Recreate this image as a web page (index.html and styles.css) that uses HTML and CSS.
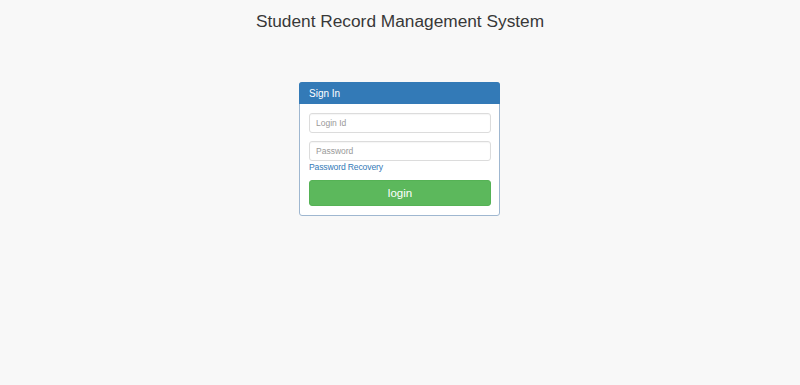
FILE: index.html
```html
<!DOCTYPE html>
<html>
<head>
<meta charset="utf-8">
<link rel="stylesheet" href="styles.css">
</head>
<body>
<h1 class="title">Student Record Management System</h1>
<div class="panel">
  <div class="panel-heading">Sign In</div>
  <div class="panel-body">
    <input class="field" type="text" placeholder="Login Id" autofocus>
    <input class="field field-second" type="password" placeholder="Password">
    <a class="recover" href="#">Password Recovery</a>
    <button class="btn-login">login</button>
  </div>
</div>
</body>
</html>
```
FILE: styles.css
```css
html, body {
  margin: 0;
  padding: 0;
}
body {
  background: #f8f8f8;
  font-family: "Liberation Sans", Arial, sans-serif;
  color: #333;
  width: 800px;
  height: 385px;
  overflow: hidden;
}
.title {
  margin: 0;
  padding-top: 10px;
  height: 22px;
  line-height: 22px;
  font-size: 17.3px;
  font-weight: normal;
  text-align: center;
  color: #383838;
}
.panel {
  width: 199px;
  margin: 50px 0 0 299px;
  border: 1px solid #9fb7d0;
  border-radius: 3px;
  background: #fff;
}
.panel-heading {
  background: #337ab7;
  color: #fff;
  font-size: 10px;
  height: 21px;
  line-height: 21px;
  margin: -1px -1px 0 -1px;
  border-radius: 3px 3px 0 0;
  padding: 1px 9px 0 10px;
}
.panel-body {
  display: flex;
  flex-direction: column;
  padding: 9px 9px 9px 9px;
}
.field {
  box-sizing: border-box;
  width: 182px;
  height: 20px;
  margin: 0;
  border: 1px solid #dcdcdc;
  border-radius: 3px;
  padding: 0 6px;
  font-family: inherit;
  font-size: 8.5px;
  color: #555;
  background: #fff;
  box-shadow: inset 0 1px 1px rgba(0,0,0,0.04);
  outline: none;
}
.field::placeholder {
  color: #999;
}
.field-second {
  margin-top: 8px;
}
.recover {
  margin-top: 0;
  font-size: 8.6px;
  letter-spacing: -0.15px;
  line-height: 12px;
  color: #337ab7;
  text-decoration: none;
}
.btn-login {
  margin-top: 7px;
  width: 182px;
  height: 26px;
  border: 1px solid #55b255;
  border-radius: 3px;
  background: #5cb85c;
  color: #fff;
  font-family: inherit;
  font-size: 11.5px;
  padding: 0;
}
```
